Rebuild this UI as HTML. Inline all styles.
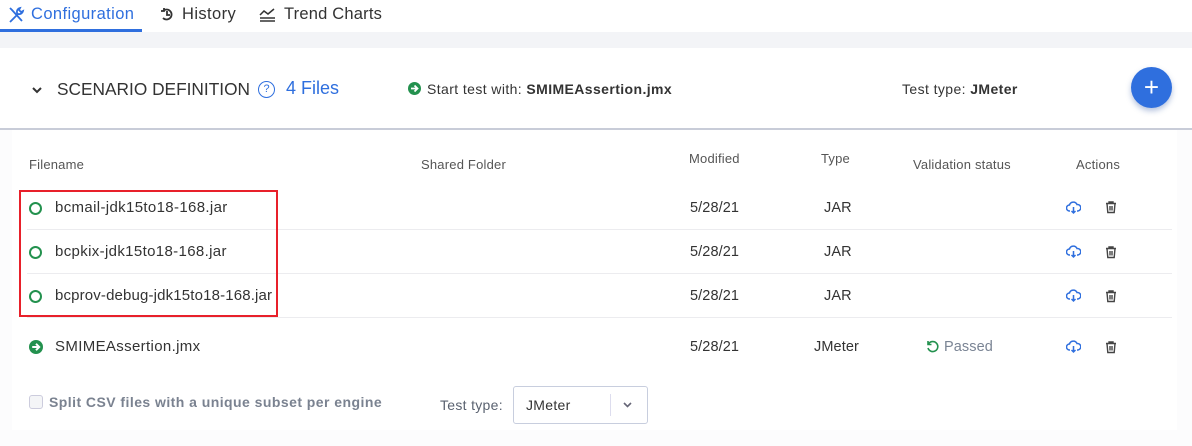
<!DOCTYPE html>
<html><head><style>
*{margin:0;padding:0;box-sizing:border-box}
body{width:1192px;height:446px;background:#fff;font-family:"Liberation Sans",sans-serif;color:#333;position:relative;overflow:hidden}
.a{position:absolute;white-space:nowrap}
.tab{font-size:16.5px;top:5px;color:#333;letter-spacing:.2px}
.hdr{font-size:13px;color:#555;top:156px;letter-spacing:.2px}
.cell{font-size:15px;color:#333;letter-spacing:.35px}
.c2{font-size:14.5px;color:#333;letter-spacing:.1px}
.line{position:absolute;left:27px;width:1145px;height:1px;background:#ececef}
.ring{position:absolute;width:13px;height:13px;border:2px solid #23914e;border-radius:50%}
</style></head><body>
<svg class="a" style="left:7px;top:6px" width="18" height="18" viewBox="0 0 18 18" fill="none" stroke="#2f6fde" stroke-width="1.8"><path d="M3 16L11 8M13 2a4 4 0 0 0-3 5l1 1a4 4 0 0 0 5-3l-2 1-2-2z"/><path d="M3 2l3 3M5 4l10 11"/></svg>
<div class="a tab" style="left:31px;color:#2f6fde;letter-spacing:.4px">Configuration</div>
<div class="a" style="left:0;top:29px;width:142px;height:3px;background:#2f6fde"></div>
<svg class="a" style="left:160px;top:7px" width="15" height="15" viewBox="0 0 15 15" fill="none" stroke="#333" stroke-width="1.8"><path d="M3 4a5 5 0 1 1 0 7M1 4h3V1M7 4v4h3"/></svg>
<div class="a tab" style="left:182px;letter-spacing:.4px">History</div>
<svg class="a" style="left:259px;top:7px" width="17" height="15" viewBox="0 0 17 15" fill="none" stroke="#333" stroke-width="1.5"><path d="M1 8l4-4 4 3 6-5M1 11h15M1 14h15"/></svg>
<div class="a tab" style="left:284px">Trend Charts</div>
<div class="a" style="left:0;top:32px;width:1192px;height:16px;background:#f3f4f7"></div>
<svg class="a" style="left:31px;top:86px" width="12" height="9" viewBox="0 0 12 9" fill="none" stroke="#333" stroke-width="2"><path d="M2 2l4 4 4-4"/></svg>
<div class="a" style="left:57px;top:79px;font-size:17.3px;color:#333">SCENARIO DEFINITION</div>
<div class="a" style="left:258px;top:81px;width:17px;height:17px;border:1.5px solid #2f6fde;border-radius:50%;color:#2f6fde;font-size:11px;text-align:center;line-height:14px">?</div>
<div class="a" style="left:286px;top:78px;font-size:18px;color:#2f6fde">4 Files</div>
<svg class="a" style="left:408px;top:82px" width="13" height="13" viewBox="0 0 13 13"><circle cx="6.5" cy="6.5" r="6.5" fill="#23914e"/><path d="M3 6.5h6M6.5 3.5l3 3-3 3" stroke="#fff" stroke-width="1.8" fill="none"/></svg>
<div class="a" style="left:427px;top:81px;font-size:14px;color:#333;letter-spacing:.4px">Start test with: <b>SMIMEAssertion.jmx</b></div>
<div class="a" style="left:902px;top:81px;font-size:14px;color:#333;letter-spacing:.4px">Test type: <b>JMeter</b></div>
<div class="a" style="left:1131px;top:67px;width:41px;height:41px;border-radius:50%;background:#2f6fde;box-shadow:0 3px 6px rgba(40,80,160,.35);color:#fff;font-size:26px;text-align:center;line-height:40px">+</div>
<div class="a" style="left:0;top:128px;width:1192px;height:2px;background:#c8ccd8"></div>
<div class="a" style="left:0;top:130px;width:1192px;height:316px;background:#fcfcfd"></div>
<div class="a" style="left:12px;top:130px;width:1165px;height:300px;background:#fff"></div>
<div class="a hdr" style="left:29px;top:157px">Filename</div>
<div class="a hdr" style="left:421px;top:157px">Shared Folder</div>
<div class="a hdr" style="left:689px;top:151px">Modified</div>
<div class="a hdr" style="left:821px;top:151px">Type</div>
<div class="a hdr" style="left:913px;top:157px">Validation status</div>
<div class="a hdr" style="left:1076px;top:157px">Actions</div>

<div class="ring" style="left:29px;top:202px"></div>
<div class="a cell" style="left:55px;top:199px">bcmail-jdk15to18-168.jar</div>
<div class="line" style="top:229px"></div>
<div class="ring" style="left:29px;top:246px"></div>
<div class="a cell" style="left:55px;top:243px">bcpkix-jdk15to18-168.jar</div>
<div class="line" style="top:273px"></div>
<div class="ring" style="left:29px;top:290px"></div>
<div class="a cell" style="left:55px;top:287px;letter-spacing:.15px">bcprov-debug-jdk15to18-168.jar</div>
<div class="line" style="top:317px"></div>
<svg class="a" style="left:29px;top:340px" width="14" height="14" viewBox="0 0 13 13"><circle cx="6.5" cy="6.5" r="6.5" fill="#23914e"/><path d="M3 6.5h6M6.5 3.5l3 3-3 3" stroke="#fff" stroke-width="1.8" fill="none"/></svg>
<div class="a cell" style="left:55px;top:338px">SMIMEAssertion.jmx</div>
<div class="a" style="left:19px;top:190px;width:259px;height:127px;border:2px solid #e8202a"></div>

<div class="a c2" style="left:690px;top:200px">5/28/21</div>
<div class="a c2" style="left:690px;top:244px">5/28/21</div>
<div class="a c2" style="left:690px;top:288px">5/28/21</div>
<div class="a c2" style="left:690px;top:339px">5/28/21</div>
<div class="a c2" style="left:824px;top:200px">JAR</div>
<div class="a c2" style="left:824px;top:244px">JAR</div>
<div class="a c2" style="left:824px;top:288px">JAR</div>
<div class="a c2" style="left:814px;top:339px">JMeter</div>
<svg class="a" style="left:926px;top:340px" width="13" height="13" viewBox="0 0 13 13" fill="none" stroke="#23914e" stroke-width="1.6"><path d="M2.5 4a5 5 0 1 1-.5 4M2 1v3.5h3.5"/></svg>
<div class="a c2" style="left:944px;top:339px;color:#7a8494">Passed</div>

<svg width="0" height="0" style="position:absolute"><defs>
<g id="dl"><path d="M4 11H3.5a3 3 0 0 1 0-6 4 4 0 0 1 7.5-.5A3 3 0 0 1 12 11h-1" fill="none" stroke="#2f6fde" stroke-width="1.5"/><path d="M7.5 7v6M5.5 11l2 2 2-2" fill="none" stroke="#2f6fde" stroke-width="1.5"/></g>
<g id="tr"><path d="M2 3.5h10M5 3.5V2h4v1.5M3 3.5l.8 9h6.4l.8-9M6 6v4.5M8 6v4.5" fill="none" stroke="#444" stroke-width="1.4"/></g>
</defs></svg>
<svg class="a" style="left:1066px;top:200px" width="15" height="15"><use href="#dl"/></svg>
<svg class="a" style="left:1104px;top:200px" width="14" height="14"><use href="#tr"/></svg>
<svg class="a" style="left:1066px;top:244px" width="15" height="15"><use href="#dl"/></svg>
<svg class="a" style="left:1104px;top:245px" width="14" height="14"><use href="#tr"/></svg>
<svg class="a" style="left:1066px;top:288px" width="15" height="15"><use href="#dl"/></svg>
<svg class="a" style="left:1104px;top:289px" width="14" height="14"><use href="#tr"/></svg>
<svg class="a" style="left:1066px;top:339px" width="15" height="15"><use href="#dl"/></svg>
<svg class="a" style="left:1104px;top:340px" width="14" height="14"><use href="#tr"/></svg>

<div class="a" style="left:29px;top:395px;width:14px;height:14px;border:1px solid #ccd;border-radius:3px;background:#f4f5f7"></div>
<div class="a" style="left:49px;top:394px;font-size:14px;font-weight:bold;color:#7a8290;letter-spacing:.45px">Split CSV files with a unique subset per engine</div>
<div class="a" style="left:440px;top:397px;font-size:14px;color:#5a6270;letter-spacing:.3px">Test type:</div>
<div class="a" style="left:513px;top:386px;width:135px;height:38px;border:1px solid #c8cede;border-radius:3px;background:#fff"></div>
<div class="a" style="left:526px;top:397px;font-size:14px;color:#333;letter-spacing:.3px">JMeter</div>
<div class="a" style="left:610px;top:394px;width:1px;height:22px;background:#dde"></div>
<svg class="a" style="left:622px;top:401px" width="11" height="8" viewBox="0 0 11 8" fill="none" stroke="#667" stroke-width="1.6"><path d="M2 2l3.5 3.5L9 2"/></svg>
</body></html>
